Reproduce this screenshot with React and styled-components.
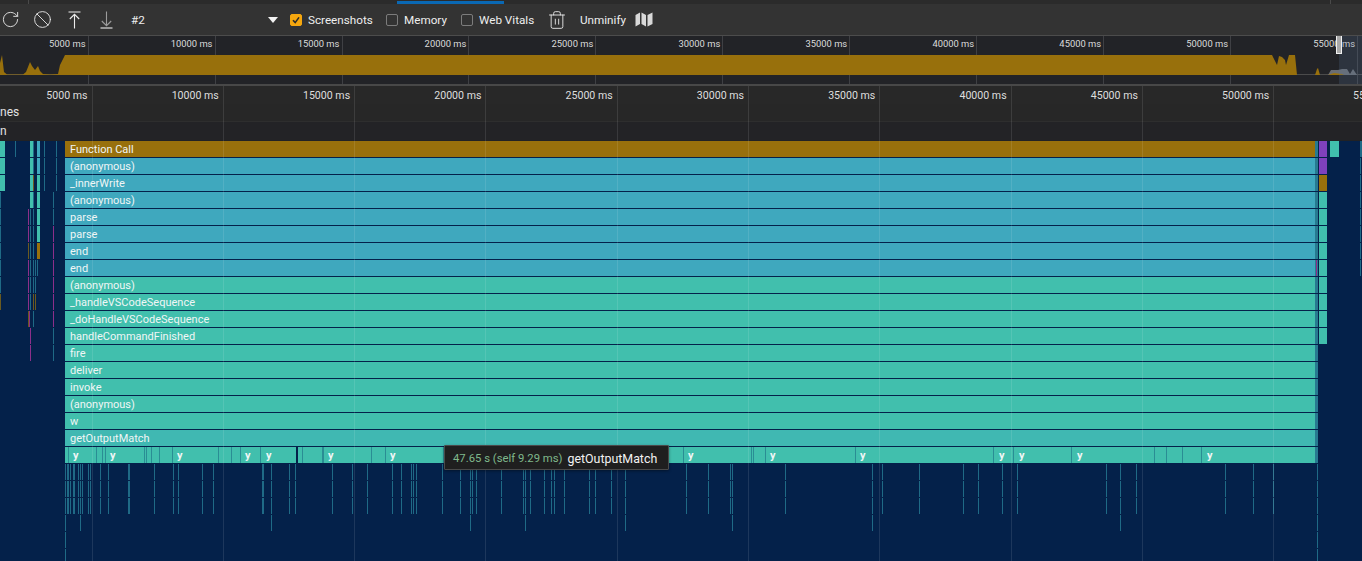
import React from 'react';
import styled, { createGlobalStyle } from 'styled-components';
import { RotateCw, Ban, Trash2 } from 'lucide-react';

const GlobalStyle = createGlobalStyle`
  html, body {
    margin: 0;
    height: 100%;
    overflow: hidden;
    background: #04214a;
  }
  body {
    font-family: Roboto, "Open Sans", "Liberation Sans", sans-serif;
    font-size: 12px;
    color: #e8e8e8;
  }
`;

const Page = styled.div`
  display: flex;
  flex-direction: column;
  width: 1362px;
  height: 561px;
  overflow: hidden;
`;

const TabStrip = styled.div`
  position: relative;
  height: 4px;
  flex: none;
  background: #2b2b2b;
`;
const ActiveTab = styled.div`
  position: absolute;
  left: 397px;
  top: 1px;
  width: 107px;
  height: 3px;
  background: #0a68b4;
`;
const TabEdge = styled.i`
  position: absolute;
  left: ${p => p.$x}px;
  top: 0;
  width: 1px;
  height: 4px;
  background: #4a4a4a;
`;

const Toolbar = styled.div`
  display: flex;
  align-items: center;
  height: 32px;
  flex: none;
  box-sizing: border-box;
  font-size: 11.7px;
  background: #333333;
  border-bottom: 1px solid #4c4c4c;
`;
const IconButton = styled.span`
  display: flex;
  justify-content: center;
  width: ${p => p.$w}px;
  flex: none;
  color: ${p => p.$color || '#e8e8e8'};
`;
const Recording = styled.span`
  width: 137px;
  margin-left: 3px;
  flex: none;
  color: #eee;
`;
const Caret = styled.span`
  width: 0;
  height: 0;
  margin-right: 12px;
  flex: none;
  border-left: 5px solid transparent;
  border-right: 5px solid transparent;
  border-top: 6px solid #f2f2f2;
`;
const CheckLabel = styled.label`
  display: flex;
  align-items: center;
  gap: 6px;
  width: ${p => p.$w}px;
  flex: none;
  color: #eee;
`;
const Box = styled.span`
  display: flex;
  align-items: center;
  justify-content: center;
  box-sizing: border-box;
  width: 12px;
  height: 12px;
  flex: none;
  border-radius: 2px;
  background: ${p => (p.$on ? '#f5a70f' : 'transparent')};
  border: 1px solid ${p => (p.$on ? '#f5a70f' : '#7c7c7c')};
`;
const Unminify = styled.span`
  width: 55px;
  margin-left: 13px;
  flex: none;
  color: #eee;
`;

const Overview = styled.div`
  position: relative;
  height: 48px;
  flex: none;
  background: #222327;
  overflow: hidden;
`;
const OverviewRuler = styled.div`
  height: 13px;
`;
const OverviewLabel = styled.span`
  position: absolute;
  top: 1px;
  right: calc(1362px - ${p => p.$x}px);
  font-size: 9.4px;
  line-height: 14px;
  color: #dcdcdc;
  white-space: nowrap;
`;
const OverviewLine = styled.i`
  position: absolute;
  top: 0;
  bottom: 0;
  width: 1px;
  background: #3f4044;
`;
const ChartSvg = styled.svg`
  position: relative;
  display: block;
  width: 1362px;
  height: 30px;
`;
const Selection = styled.div`
  position: absolute;
  left: 1339px;
  right: 0;
  top: 0;
  bottom: 0;
  background: rgba(92, 118, 160, 0.2);
`;
const Handle = styled.div`
  position: absolute;
  left: 1336px;
  top: 0;
  width: 6px;
  height: 18px;
  box-sizing: border-box;
  background: #a9a9a9;
  border: 1px solid #f0f0f0;
  border-top: 0;
`;

const Divider = styled.div`
  height: 2px;
  flex: none;
  background: #484848;
`;

const Timeline = styled.div`
  position: relative;
  flex: 1;
  min-height: 0;
  overflow: hidden;
`;
const Ruler = styled.div`
  position: relative;
  height: 18px;
  background: #282828;
`;
const RulerLabel = styled.span`
  position: absolute;
  top: 1px;
  font-size: 10.6px;
  line-height: 17px;
  color: #dedede;
  white-space: nowrap;
  right: calc(1362px - ${p => p.$x}px);
`;
const RulerCut = styled.span`
  position: absolute;
  top: 1px;
  left: 1353px;
  font-size: 10.6px;
  line-height: 17px;
  color: #dedede;
`;
const Track = styled.div`
  height: ${p => p.$h}px;
  box-sizing: border-box;
  padding-top: ${p => p.$pad}px;
  background: ${p => p.$bg};
  border-bottom: 1px solid ${p => p.$line};
  font-size: 12px;
  line-height: 14px;
  color: #e2e2e2;
  white-space: nowrap;
`;
const Gridline = styled.i`
  position: absolute;
  top: 0;
  bottom: 0;
  width: 1px;
  background: rgba(255, 255, 255, 0.1);
  z-index: 3;
`;

const Flame = styled.div`
  position: relative;
  height: 420px;
  background: #04214a;
`;
const Bar = styled.div`
  position: absolute;
  height: 16px;
  box-sizing: border-box;
  padding-left: ${p => p.$pad || 0}px;
  font-size: 11px;
  line-height: 18px;
  color: #f0f6f6;
  white-space: nowrap;
  overflow: hidden;
`;
const Tip = styled.div`
  position: absolute;
  left: 444px;
  top: 304px;
  width: 225px;
  height: 25px;
  box-sizing: border-box;
  display: flex;
  align-items: center;
  gap: 5px;
  padding: 1px 0 0 8px;
  background: #1f1f1f;
  border: 1px solid #4a4a4a;
  border-radius: 1px;
  box-shadow: 0 1px 3px rgba(0, 0, 0, 0.4);
  z-index: 5;
  white-space: nowrap;
`;
const TipTime = styled.span`
  font-size: 11.3px;
  color: #7fb98c;
`;
const TipName = styled.span`
  font-size: 12.4px;
  color: #f2f2f2;
`;

const GOLD = '#98700c';
const BLUE = '#3fa8be';
const GREEN = '#41bfad';
const TEAL = '#40b8b2';
const DIM = '#1f6a86';
const EDGE = '#277a90';
const PURPLE = '#7f41bd';
const PINK = '#8c2f8a';
const BROWN = '#6a5a20';

const stack = [
  ['Function Call', GOLD],
  ['(anonymous)', BLUE],
  ['_innerWrite', BLUE],
  ['(anonymous)', BLUE],
  ['parse', BLUE],
  ['parse', BLUE],
  ['end', BLUE],
  ['end', BLUE],
  ['(anonymous)', GREEN],
  ['_handleVSCodeSequence', GREEN],
  ['_doHandleVSCodeSequence', GREEN],
  ['handleCommandFinished', GREEN],
  ['fire', GREEN],
  ['deliver', GREEN],
  ['invoke', GREEN],
  ['(anonymous)', GREEN],
  ['w', GREEN],
  ['getOutputMatch', TEAL],
];

const overviewLabels = [5000, 10000, 15000, 20000, 25000, 30000, 35000, 40000, 45000, 50000, 55000];

const ySplits = [
  68.3, 95.7, 102, 105.3, 143.7, 146.3, 151.3, 159.3, 171.7, 217.7, 231.3, 240.3, 260.3, 302.3,
  321.7, 323.3, 371.3, 384.7, 442.7, 682.7, 750.7, 753.3, 764.7, 854.7, 993.3, 1013.3, 1071.3,
  1154.3, 1166.3, 1182.3, 1201.3,
];
const yLabels = [71, 108, 175, 243, 264, 326, 388, 686, 768, 858, 997, 1017, 1075, 1205];

const calleeTicks = [
  [65, 1], [67, 2], [70, 1], [73, 2], [78, 1], [80, 1], [82, 1], [88, 1], [90, 1], [100, 1],
  [108, 1], [128, 2], [154, 1], [173, 1], [178, 1], [202, 1], [213, 1], [262, 2], [271, 1],
  [289, 1], [295, 1], [332, 1], [352, 1], [367, 1], [392, 1], [401, 1], [411, 1], [413, 1],
  [416, 1], [442, 1], [460, 1], [470, 1], [472, 1], [476, 1], [501, 1], [523, 1], [525, 1],
  [530, 1], [544, 1], [551, 1], [554, 1], [564, 1], [589, 1], [595, 1], [611, 1], [625, 1],
  [686, 1], [708, 1], [730, 1], [732, 1], [785, 1], [872, 1], [882, 1], [919, 1], [963, 1],
  [978, 1], [1002, 1], [1017, 1], [1106, 1], [1120, 1], [1136, 1], [1225, 1], [1253, 1],
  [1273, 1], [1317, 1],
];
const deepTicks = [65, 80, 271, 470, 525, 625, 732, 872, 1120, 1317];

// [row, x, width, colour] for the short frames either side of the long call
const sideFrames = [
  [0, 0, 5, GREEN], [0, 15, 1, DIM], [0, 30, 3, GREEN], [0, 33, 1, DIM], [0, 37, 3, BLUE], [0, 44, 1, DIM], [0, 56, 1, DIM],
  [1, 0, 5, GREEN], [1, 30, 3, GREEN], [1, 33, 1, DIM], [1, 37, 3, BLUE], [1, 44, 1, DIM], [1, 56, 1, DIM],
  [2, 0, 5, GREEN], [2, 30, 3, GREEN], [2, 33, 1, BROWN], [2, 37, 3, GREEN], [2, 44, 1, DIM], [2, 56, 1, DIM],
  [3, 0, 1, DIM], [3, 30, 3, GREEN], [3, 33, 1, DIM], [3, 37, 3, GREEN], [3, 53, 1, DIM],
  [4, 0, 1, DIM], [4, 28, 1, PINK], [4, 30, 1, DIM], [4, 33, 1, DIM], [4, 37, 3, GREEN], [4, 53, 1, DIM],
  [5, 0, 1, DIM], [5, 28, 1, PINK], [5, 30, 1, DIM], [5, 33, 1, DIM], [5, 37, 3, GREEN], [5, 53, 1, PINK],
  [6, 0, 1, DIM], [6, 28, 1, BROWN], [6, 30, 1, DIM], [6, 33, 1, DIM], [6, 37, 3, GOLD], [6, 53, 1, PINK],
  [7, 0, 1, DIM], [7, 28, 1, PINK], [7, 30, 1, DIM], [7, 33, 1, DIM], [7, 35, 1, DIM], [7, 37, 1, DIM], [7, 53, 1, PINK],
  [8, 0, 1, DIM], [8, 28, 1, PINK], [8, 30, 1, DIM], [8, 33, 1, DIM], [8, 35, 1, DIM], [8, 53, 1, PINK],
  [9, 0, 1, BROWN], [9, 28, 1, PINK], [9, 30, 1, DIM], [9, 33, 1, BROWN], [9, 35, 1, BROWN], [9, 53, 1, PINK],
  [10, 28, 1, BROWN], [10, 29, 1, PINK], [10, 33, 1, DIM], [10, 53, 1, PINK],
  [11, 30, 1, PINK], [11, 53, 1, DIM],
  [12, 30, 1, PINK], [12, 53, 1, DIM],
  [0, 1319, 8, PURPLE], [1, 1319, 8, PURPLE], [2, 1319, 8, GOLD],
  [3, 1319, 8, GREEN], [4, 1319, 8, GREEN], [5, 1319, 8, GREEN], [6, 1319, 8, GREEN], [7, 1319, 8, GREEN],
  [8, 1319, 8, GREEN], [9, 1319, 8, GREEN], [10, 1319, 8, GREEN], [11, 1319, 8, GREEN],
  [0, 1330, 9, GREEN], [0, 1360, 2, DIM], [1, 1360, 1, DIM], [2, 1360, 1, DIM], [3, 1360, 1, DIM],
  [4, 1360, 1, DIM], [5, 1360, 1, DIM], [6, 1360, 1, DIM], [7, 1360, 1, DIM],
  [7, 1316, 1, PINK],
];

const rowTop = row => row * 17;

const UploadIcon = () => (
  <svg width="13" height="18" viewBox="0 0 13 18" fill="none" stroke="#ececec" strokeWidth="1.1">
    <path d="M0.5 1 H12.5 M6.5 17.5 V3.5 M1.8 8 L6.5 3.3 L11.2 8" />
  </svg>
);

const DownloadIcon = () => (
  <svg width="13" height="18" viewBox="0 0 13 18" fill="none" strokeWidth="1.1">
    <path d="M6.5 0.5 V14.5 M1.8 10 L6.5 14.7 L11.2 10" stroke="#9c9c9c" />
    <path d="M0.5 17 H12.5" stroke="#ececec" />
  </svg>
);

const MapIcon = () => (
  <svg width="18" height="15" viewBox="0 0 18 15">
    <path d="M0.5 3 L5 0.5 V12 L0.5 14.5 Z M6.5 0.5 L11 3 V14.5 L6.5 12 Z M12.5 3 L17.5 0.5 V12 L12.5 14.5 Z" fill="#d8d8d8" />
  </svg>
);

const Check = ({ on, label, w }) => (
  <CheckLabel $w={w}>
    <Box $on={on}>
      {on && (
        <svg width="10" height="10" viewBox="0 0 10 10">
          <path d="M2 5.2 L4.2 7.6 L8 2.4" fill="none" stroke="#2a2a2a" strokeWidth="1.6" />
        </svg>
      )}
    </Box>
    {label}
  </CheckLabel>
);

const App = () => (
  <Page>
    <GlobalStyle />
    <TabStrip>
      <TabEdge $x={28} />
      <ActiveTab />
      <TabEdge $x={1330} />
    </TabStrip>
    <Toolbar>
      <IconButton $w={20}><RotateCw size={19} strokeWidth={1.15} /></IconButton>
      <IconButton $w={44}><Ban size={19} strokeWidth={1.15} /></IconButton>
      <IconButton $w={20}><UploadIcon /></IconButton>
      <IconButton $w={44}><DownloadIcon /></IconButton>
      <Recording>#2</Recording>
      <Caret />
      <Check on label="Screenshots" w={96} />
      <Check label="Memory" w={75} />
      <Check label="Web Vitals" w={86} />
      <IconButton $w={20}><Trash2 size={20} strokeWidth={1.1} /></IconButton>
      <Unminify>Unminify</Unminify>
      <MapIcon />
    </Toolbar>

    <Overview>
      <OverviewRuler />
      {overviewLabels.map((ms, i) => (
        <React.Fragment key={ms}>
          <OverviewLine style={{ left: 87.6 + 126.95 * i }} />
          <OverviewLabel $x={85.5 + 126.95 * i}>{ms} ms</OverviewLabel>
        </React.Fragment>
      ))}
      <ChartSvg viewBox="0 0 1362 30" preserveAspectRatio="none">
        <path d="M0 25.5 H1362" stroke="#4b4b4b" strokeWidth="1" />
        <path d="M1328 26 L1331 21 L1338 21 L1342 20 L1347 20 L1350 25 L1353 20 L1357 26 Z" fill="#6a6d72" />
        <path
          d="M0 26 V14 L2 6 L4 23 L7 25.5 H23 L26 23 L30 13 L32 17 L35 21 L38 17 L40 22 L43 25 L50 25.5 L58 25 L60 16 L65 6 H1272 L1275 12 L1277 16 L1279 7 L1282 8 L1285 11 L1286 16 L1289 6 H1295 L1297 26 H1315 L1317 20 L1318 19 L1320 26 H1328 L1334 24 L1342 25 L1344 26 Z"
          fill="#98700c"
        />
      </ChartSvg>
      <Selection />
      <Handle />
    </Overview>
    <Divider />

    <Timeline>
      <Ruler>
        {overviewLabels.slice(0, 10).map((ms, i) => (
          <RulerLabel key={ms} $x={87.5 + 131.3 * i}>{ms} ms</RulerLabel>
        ))}
        <RulerCut>55</RulerCut>
      </Ruler>
      <Track $h={18} $pad={1} $bg="#272727" $line="#2e2e2e">nes</Track>
      <Track $h={19} $pad={2} $bg="#232326" $line="#212225">n</Track>
      <Flame>
        {stack.map(([name, color], row) => (
          <React.Fragment key={row}>
            <Bar $pad={5} style={{ top: rowTop(row), left: 65, width: 1250, background: color }}>{name}</Bar>
            <Bar style={{ top: rowTop(row), left: 1315, width: 3, background: EDGE }} />
          </React.Fragment>
        ))}

        {sideFrames.map(([row, x, w, color], i) => (
          <Bar key={i} style={{ top: rowTop(row), left: x, width: w, background: color }} />
        ))}

        <Bar style={{ top: rowTop(18), left: 65, width: 1250, background: GREEN }} />
        <Bar style={{ top: rowTop(18), left: 1315, width: 3, background: EDGE }} />
        <Bar style={{ top: rowTop(18), left: 296, width: 2, background: '#04214a' }} />
        {ySplits.map(x => (
          <Bar key={x} style={{ top: rowTop(18), left: x, width: 1, background: '#2a8d94' }} />
        ))}
        {yLabels.map(x => (
          <Bar key={x} $pad={2} style={{ top: rowTop(18), left: x }}><b>y</b></Bar>
        ))}

        {[19, 20, 21].map(row => calleeTicks.map(([x, w]) => (
          <Bar key={`${row}-${x}`} style={{ top: rowTop(row), left: x, width: w, background: DIM }} />
        )))}
        {deepTicks.map(x => (
          <Bar key={x} style={{ top: rowTop(22), left: x, width: 1, background: DIM }} />
        ))}
        {[23, 24].map(row => [65, 1317].map(x => (
          <Bar key={`${row}-${x}`} style={{ top: rowTop(row), left: x, width: 1, background: DIM }} />
        )))}

        <Tip>
          <TipTime>47.65 s (self 9.29 ms)</TipTime>
          <TipName>getOutputMatch</TipName>
        </Tip>
      </Flame>
      {overviewLabels.slice(0, 10).map((ms, i) => (
        <Gridline key={ms} style={{ left: 91.5 + 131.3 * i }} />
      ))}
    </Timeline>
  </Page>
);

export default App;
